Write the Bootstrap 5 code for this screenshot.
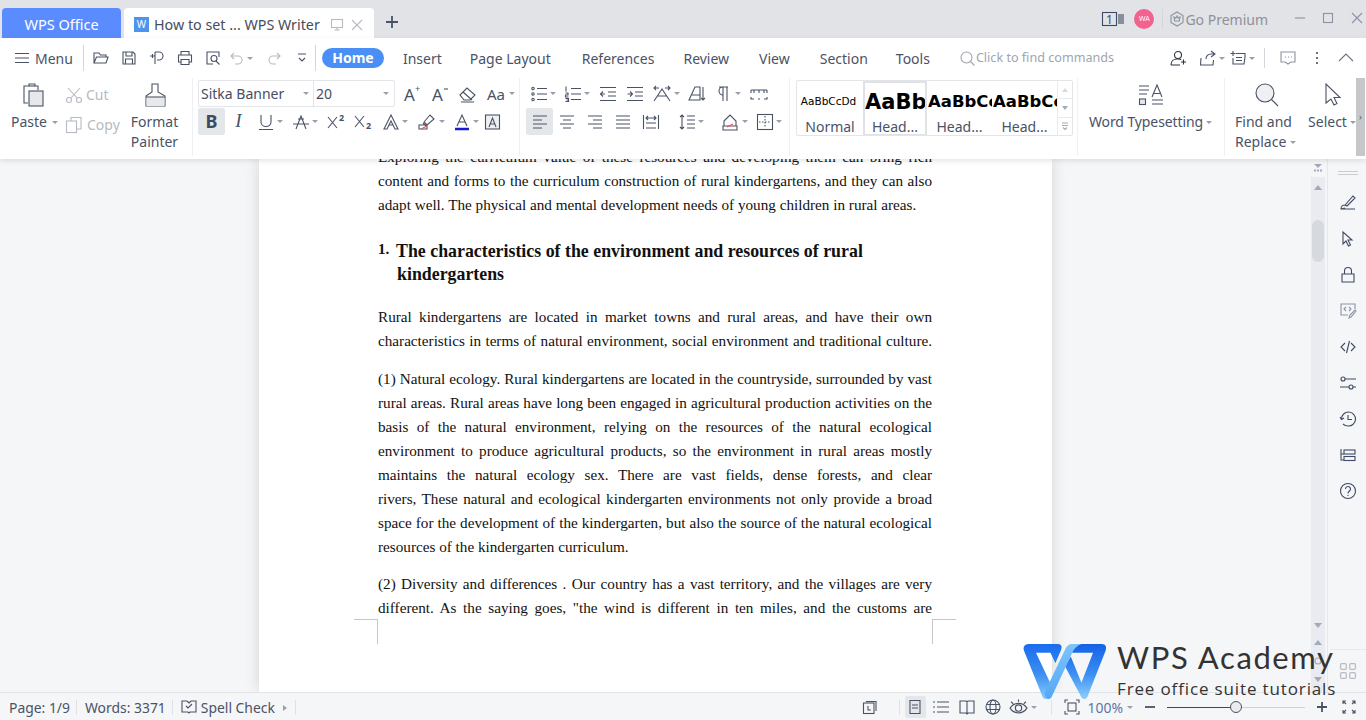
<!DOCTYPE html>
<html lang="en"><head><meta charset="utf-8"><title>WPS Writer</title>
<link href="https://cdn.jsdelivr.net/npm/bootstrap@5.3.0/dist/css/bootstrap.min.css" rel="stylesheet">
<style>
html,body{margin:0;height:720px;overflow:hidden}
body{font-family:"Noto Sans",sans-serif;font-size:14px;color:#4a5266;background:#f5f6f8}
svg{display:block;fill:none;stroke:currentColor;stroke-width:1.1;overflow:visible}
svg text{stroke:none;fill:currentColor;font-family:"Noto Sans",sans-serif}
.app{position:relative;width:1366px;height:720px;overflow:hidden}
.ttl{height:38px;background:#e1e3e7;padding:8px 0 0 2px}
.tb-wps{width:119px;height:30px;background:#5b8cff;color:#fff;border-radius:4px 4px 0 0;font-size:14.5px;padding-top:3px}
.tb-doc{width:250px;height:30px;margin-left:3px;background:#fff;border-radius:4px 4px 0 0;padding:3px 0 0 10px;color:#454d5f;font-size:14.3px}
.wlogo{width:15px;height:15px;background:#4c94ee;color:#fff;font-size:10px;line-height:15px;text-align:center;margin-right:5px}
.i10{width:14px;height:14px}.i12{width:12px;height:12px}.i16{width:16px;height:16px}.i18{width:18px;height:18px}.i20{width:20px;height:20px}.i24{width:24px;height:24px}.i26{width:26px;height:26px}
.plus{margin:8px 0 0 12px;color:#4a5266}
.ttl-r{margin-left:auto;margin-top:-8px;height:38px;color:#8c93a0}
.avat{width:20px;height:20px;border-radius:50%;background:#f2628f;color:#fff;font-size:7px;line-height:20px;text-align:center}
.vln{width:1px;background:#d4d6db}
.prem{font-size:14px;color:#8d919b}
.rib{height:121px;background:#fff;position:relative;z-index:2;box-shadow:0 2px 5px rgba(0,0,0,.1)}
.tabs{height:40px;padding-left:15px}
.pill{background:#4a8ff5;color:#fff;font-weight:700;border-radius:10px;width:62px;height:20px;line-height:20px;text-align:center;font-size:14px}
.tabtx{font-size:14px;color:#4a5266;white-space:nowrap}
.gry{color:#b6bac2}
.srch{color:#a0a5af;font-size:12.6px;white-space:nowrap}
.tools{height:81px}
.grp{height:78px;border-right:1px solid #eff0f2;flex:none}
.caret-d{width:0;height:0;border-left:3px solid transparent;border-right:3px solid transparent;border-top:3px solid #9a9fab;flex:none}
.lbl{font-size:14px;line-height:20px;white-space:nowrap}
.cel{height:27px;flex:none;gap:3px}
.on{background:#e4e7ea;border-radius:2px}
.fbox{width:197px;height:27px;border:1px solid #e3e5e9;border-radius:2px;flex:none}
.fsel{height:100%;padding:0 4px 0 2px;font-size:14px;color:#454d5f}
.fname{width:115px;border-right:1px solid #e3e5e9}
.sty{width:277px;height:56px;margin:2px 0 0 6px;border:1px solid #e3e5e9;border-radius:2px;flex:none}
.stc{flex:none;height:100%;overflow:hidden;font-family:"DejaVu Sans",sans-serif;color:#000;white-space:nowrap}
.stn{font-size:14px;color:#4a5266;font-family:"Noto Sans",sans-serif;line-height:15px;font-weight:400;flex:none}
.stsel{border:2px solid #e0e2e6;border-bottom-width:1px}
.smp{height:38px;line-height:41px;font-weight:700;overflow:hidden;width:100%;padding-left:1px;flex:none}
.stscr{width:15px;border-left:1px solid #e9ebee;margin-left:auto;flex:none;color:#a5aab4}
.stscr>div{flex:1;border-bottom:1px solid #e9ebee}
.stscr>div:last-child{border:0}
.rsb{width:9px;height:78px;background:#c6c7c9;color:#555;font-size:9px;flex:none}
.wk{height:533px}
.docar{width:1311px;flex:none;overflow:hidden}
.pg{width:793px;height:533px;background:#fff;box-shadow:0 0 14px rgba(0,0,0,.14);padding:0 120px 0 119px;font-family:"Liberation Serif",serif;color:#111;font-size:15.2px;overflow:hidden;flex:none}
.ln{line-height:24px;text-align:justify;text-align-last:justify;white-space:nowrap}
.fst{margin-top:-14px}
.lft{text-align-last:left}
.gp14{margin-top:14px}.gp13{margin-top:13px}
.hd{font-weight:700;font-size:17.85px;line-height:23px;margin-top:21px;color:#111;white-space:nowrap}
.hd2{padding-left:19px;margin-top:0;margin-bottom:19px}
.hnum{font-size:15px;display:inline-block;width:18px;vertical-align:3px}
.crp{margin:-1px -24px 0;height:25px}
.crp i{display:block;width:24px;height:25px;border-top:1px solid #c6c6c6}
.crp i:first-child{border-right:1px solid #c6c6c6}
.crp i:last-child{border-left:1px solid #c6c6c6}
.vcol{width:14px;flex:none;color:#a3a9b8}
.vtop{height:18px;padding-top:5px}
.vsb{background:#e9ebf0;flex:1}
.thm{width:12px;height:42px;background:#d6d9de;border-radius:6px;margin-top:30px}
.arr{width:0;height:0;border-left:4px solid transparent;border-right:4px solid transparent}
.au{border-bottom:5px solid #a3a9b8}.ad{border-top:5px solid #a3a9b8}
.sdp{width:39px;margin-left:2px;padding-left:2px;border-left:1px solid #e6e7ea;color:#3f4a63;flex:none}
.sdi{height:36px}
.dbl{width:20px;height:4px;border-top:1px solid #c9ccd3;border-bottom:1px solid #c9ccd3;margin:12px 0 10px}
.st{height:29px;border-top:1px solid #e3e4e8;background:#f5f6f8;padding-left:9px;font-size:13.9px;color:#4a5266}
.st>span{position:relative;top:1px}
.sp{width:1px;height:15px;background:#dfe1e5;flex:none}
.crr{width:0;height:0;border-top:3px solid transparent;border-bottom:3px solid transparent;border-left:4px solid #9a9fab}
.sld{width:138px;height:1px;background:#cfd2d8;position:relative;flex:none}
.sldf{height:1px;width:69px;background:#3d4a63}
.knb{position:absolute;left:63px;top:-6px;width:12px;height:12px;border-radius:50%;background:#e9ebee;border:1px solid #4a5266}
.wm{position:absolute;left:1023px;top:643px;z-index:5;pointer-events:none}
.wm1{font-family:Lato,sans-serif;font-weight:400;font-size:31px;line-height:32px;letter-spacing:1.6px;color:#333;white-space:nowrap;position:absolute;left:94px;top:-2px}
.wm2{font-family:"Open Sans",sans-serif;font-size:17px;line-height:20px;letter-spacing:.86px;color:#333;white-space:nowrap;position:absolute;left:94px;top:36px}
.w20{width:20px}.w27{width:27px}.w28{width:28px}.w34{width:34px}.w36{width:36px}
.ml8{margin-left:8px}.ml7{margin-left:7px}
</style></head><body>
<div class="app">

<!-- title bar -->
<div class="ttl d-flex">
 <div class="tb-wps d-flex align-items-center justify-content-center">WPS Office</div>
 <div class="tb-doc d-flex align-items-center">
  <div class="wlogo">W</div><span>How to set ... WPS Writer</span>
  <svg class="i12 gry" style="margin-left:11px" viewBox="0 0 12 12"><rect x=".5" y=".5" width="11" height="8"/><path d="M6 8.5V11M3.5 11h5"/></svg>
  <svg class="i12 gry ms-2" viewBox="0 0 12 12"><path d="M1 1l10 10M11 1L1 11"/></svg>
 </div>
 <svg class="i12 plus" viewBox="0 0 12 12"><path stroke-width="1.8" d="M6 0v12M0 6h12"/></svg>
 <div class="ttl-r d-flex align-items-center">
  <svg viewBox="0 0 22 14" style="width:22px;height:14px;color:#3f4a63"><rect x=".5" y=".5" width="14" height="13"/><text x="4" y="12" font-size="12" fill="#3f4a63">1</text><path d="M17 2v10M19 2v10M21 2v10"/></svg>
  <div class="avat" style="margin-left:10px">WA</div>
  <div class="vln" style="height:20px;margin-left:8px"></div>
  <svg class="i16" style="margin-left:6px" viewBox="0 0 16 16"><path d="M8 1l6 3.5v7L8 15l-6-3.5v-7zM5 6l1.8 1.3L8 5l1.2 2.3L11 6l-.7 4H5.700z"/></svg>
  <span class="prem">Go Premium</span>
  <svg class="i12" style="margin-left:26px" viewBox="0 0 12 12"><path d="M1 5h10"/></svg>
  <svg class="i12" style="margin-left:16px" viewBox="0 0 12 12"><rect x="1.500" y=".5" width="9" height="9"/></svg>
  <svg class="i12" style="margin-left:17px;margin-right:3px" viewBox="0 0 12 12"><path d="M1 0l10 10M11 0L1 10"/></svg>
 </div>
</div>

<div class="rib">
 <!-- tabs -->
 <div class="tabs d-flex align-items-center">
  <svg class="i16" style="width:14px" viewBox="0 0 14 12"><path d="M0 1.500h14M0 6h14M0 10.500h14"/></svg>
  <span class="tabtx" style="margin-left:6px">Menu</span>
  <div class="vln" style="height:26px;margin-left:10px"></div>
  <svg class="i16" style="margin-left:9px" viewBox="0 0 16 16"><path d="M1 13V3h5l1.500 2H13v2M1 13l2.500-6H15l-2 6z"/></svg>
  <svg class="i16" style="margin-left:12px" viewBox="0 0 16 16"><path d="M2 2h10l2 2v10H2zM5 2v4h6V2M4.500 14V9h7v5"/></svg>
  <svg class="i16" style="margin-left:12px" viewBox="0 0 16 16"><path d="M6 2h4a3 3 0 010 8H8M6 2v12M1 6h5M3.500 4v4"/></svg>
  <svg class="i16" style="margin-left:12px" viewBox="0 0 16 16"><path d="M4 5V1.500h8V5M4 12H1.500V5h13v7H12M4 9.500h8v5H4z"/></svg>
  <svg class="i16" style="margin-left:12px" viewBox="0 0 16 16"><path d="M14 7V2H2v12h6"/><circle cx="9" cy="8.500" r="3"/><path d="M11 11l3.500 3.500"/></svg>
  <svg class="i12 gry" style="margin-left:9px;width:14px" viewBox="0 0 14 12"><path d="M4 1L1 4l3 3M1 4h7a4 4 0 010 8H5"/></svg>
  <div class="caret-d" style="margin-left:3px"></div>
  <svg class="i12 gry" style="margin-left:14px;width:14px" viewBox="0 0 14 12"><path d="M10 1l3 3-3 3M13 4H6a4 4 0 000 8h3"/></svg>
  <svg class="i10" style="margin-left:16px;width:10px;height:10px" viewBox="0 0 10 10"><path d="M1 1h8M2 5l3 3 3-3"/></svg>
  <div class="vln" style="height:26px;margin-left:8px"></div>
  <div class="pill" style="margin-left:6px">Home</div>
  <span class="tabtx" style="margin-left:19px">Insert</span>
  <span class="tabtx" style="margin-left:28px">Page Layout</span>
  <span class="tabtx" style="margin-left:31px">References</span>
  <span class="tabtx" style="margin-left:29px">Review</span>
  <span class="tabtx" style="margin-left:30px">View</span>
  <span class="tabtx" style="margin-left:30px">Section</span>
  <span class="tabtx" style="margin-left:28px">Tools</span>
  <svg class="i16" style="margin-left:30px;color:#a0a5af;width:15px;height:15px" viewBox="0 0 15 15"><circle cx="6.500" cy="6.500" r="5.500"/><path d="M10.500 10.500l4 4"/></svg>
  <span class="srch" style="margin-left:1px">Click to find commands</span>
  <svg class="i16" style="margin-left:56px;color:#2c3344" viewBox="0 0 16 16"><circle cx="8" cy="5" r="3.500"/><path d="M1 15c0-4 3-6 6-6h2c1 0 2 .5 2 1M1 15h9M11 12h5M13.500 9.500v5"/></svg>
  <svg class="i16" style="margin-left:14px" viewBox="0 0 16 16"><path d="M11 1l4 3-4 3M15 4h-4c-3 0-5 2-5 5M1 8l-.5 7H13l.5-5"/></svg>
  <div class="caret-d" style="margin-left:3px"></div>
  <svg class="i16" style="margin-left:5px" viewBox="0 0 16 16"><path d="M3 1v5M.5 3.500h5M6 3.500h9V7l-1 7H3V8M6 7.500h6M6 10.500h6"/></svg>
  <div class="caret-d" style="margin-left:3px"></div>
  <div class="vln" style="height:20px;margin-left:9px"></div>
  <svg class="i16" style="margin-left:15px;color:#8c93a0" viewBox="0 0 16 16"><path d="M1 2h14v10h-4l-3 2-3-2H1z"/><path stroke-width="1.500" d="M5 7h.7M8 7h.7M11 7h.7"/></svg>
  <svg class="i16" style="margin-left:13px;color:#6b7280" viewBox="0 0 16 16"><path stroke-width="2" d="M8 2v2M8 7v2M8 12v2"/></svg>
  <svg class="i16" style="margin-left:13px;color:#6b7280" viewBox="0 0 16 16"><path d="M1 11l7-7 7 7"/></svg>
 </div>

 <!-- ribbon tools -->
 <div class="tools d-flex">
  <!-- clipboard -->
  <div class="grp d-flex" style="width:193px;padding-left:5px">
   <div class="d-flex flex-column align-items-center" style="width:56px;padding-top:5px">
    <svg class="i24" viewBox="0 0 24 24"><path d="M17 7V3h-3V1H8v2H3v17h4"/><path d="M8 3h6"/><rect x="8" y="8" width="14" height="15" fill="#e6e8ec"/></svg>
    <div class="lbl d-flex align-items-center" style="gap:5px;margin:5px 0 0 3px">Paste<span class="caret-d"></span></div>
   </div>
   <div class="d-flex flex-column gry" style="width:66px;padding:8px 0 0 5px">
    <div class="d-flex align-items-center" style="gap:4px;height:18px">
     <svg class="i16" viewBox="0 0 16 16"><circle cx="3" cy="13" r="2.500"/><circle cx="13" cy="13" r="2.500"/><path d="M5 11L14 1M11 11L2 1"/></svg><span class="lbl">Cut</span></div>
    <div class="d-flex align-items-center" style="gap:5px;height:18px;margin-top:12px">
     <svg class="i16" viewBox="0 0 16 16"><path d="M5 4V.5h10V12h-4"/><rect x=".5" y="4" width="10" height="11.500"/></svg><span class="lbl">Copy</span></div>
   </div>
   <div class="d-flex flex-column align-items-center" style="width:49px;margin-left:3px;padding-top:5px">
    <svg class="i24" viewBox="0 0 24 24"><path d="M9 1h6v8l7 4v10H3V13l6-4z"/><path d="M3.500 14.500h18V23h-18z" fill="#e6e8ec" stroke="none"/><path d="M3 14h19"/></svg>
    <div class="lbl" style="margin-top:5px">Format</div><div class="lbl">Painter</div>
   </div>
  </div>
  <!-- font -->
  <div class="grp" style="width:327px;padding:2px 0 0 5px">
   <div class="d-flex">
    <div class="fbox d-flex align-items-center">
     <div class="fsel fname d-flex align-items-center justify-content-between">Sitka Banner<span class="caret-d"></span></div>
     <div class="fsel flex-grow-1 d-flex align-items-center justify-content-between">20<span class="caret-d" style="margin-right:1px"></span></div>
    </div>
    <div class="cel w28 ms-1 d-flex align-items-center justify-content-center"><svg class="i18" viewBox="0 0 18 18"><text x="0" y="16" font-size="17">A</text><text x="11" y="7" font-size="9">+</text></svg></div>
    <div class="cel w28 d-flex align-items-center justify-content-center"><svg class="i18" viewBox="0 0 18 18"><text x="0" y="16" font-size="17">A</text><path d="M12 4h4"/></svg></div>
    <div class="cel w28 d-flex align-items-center justify-content-center"><svg class="i18" viewBox="0 0 18 18"><path d="M0 10l7-7 8 7-5 5H4zM3 7l9 8M1 17h13"/></svg></div>
    <div class="cel w36 d-flex align-items-center justify-content-center"><svg class="i18" viewBox="0 0 18 18"><text x="-1" y="15" font-size="15">Aa</text></svg><span class="caret-d"></span></div>
   </div>
   <div class="d-flex" style="margin-top:1px">
    <div class="cel w27 on d-flex align-items-center justify-content-center"><span style="font-weight:700;font-size:18px;color:#3d4a63">B</span></div>
    <div class="cel w27 d-flex align-items-center justify-content-center"><span style="font-style:italic;font-family:'Liberation Serif';font-size:19px">I</span></div>
    <div class="cel w36 d-flex align-items-center justify-content-center"><svg class="i16" viewBox="0 0 16 16"><path d="M3 1v7c0 6 10 6 10 0V1M1 15.500h14"/></svg><span class="caret-d"></span></div>
    <div class="cel w34 d-flex align-items-center justify-content-center"><svg class="i16" viewBox="0 0 16 16"><path d="M3 15L8 2l5 13M0 10h16M5 5h6"/></svg><span class="caret-d"></span></div>
    <div class="cel w27 d-flex align-items-center justify-content-center"><svg class="i18" viewBox="0 0 18 18"><path d="M1 4l9 11M10 4l-9 11"/><text x="12" y="8" font-size="9" font-weight="700">2</text></svg></div>
    <div class="cel w28 d-flex align-items-center justify-content-center"><svg class="i18" viewBox="0 0 18 18"><path d="M1 3l9 11M10 3L1 14"/><text x="12" y="16" font-size="9" font-weight="700">2</text></svg></div>
    <div class="cel w36 d-flex align-items-center justify-content-center"><svg class="i16" viewBox="0 0 16 16"><path d="M1 15L8 1l7 14h-3L8 7l-4 8zM6 11h4"/></svg><span class="caret-d"></span></div>
    <div class="cel w36 d-flex align-items-center justify-content-center"><svg class="i18" viewBox="0 0 18 18"><path d="M6 9l6-7 4 4-7 6zM5 10l3 3M1 12h8v4H1z"/><path d="M3 16l6-3" stroke="#e05a5a"/></svg><span class="caret-d"></span></div>
    <div class="cel w34 d-flex align-items-center justify-content-center"><svg class="i16" viewBox="0 0 16 16"><path d="M3 12L8 1l5 11M5 8h6"/><path d="M1 15h14" stroke="#1a1ad6" stroke-width="2.500"/></svg><span class="caret-d"></span></div>
    <div class="cel w20 d-flex align-items-center justify-content-center"><svg class="i16" viewBox="0 0 16 16"><rect x=".5" y="1" width="14" height="14" fill="#eef0f2"/><path d="M4 13l3.500-9 3.500 9M5 10h5"/></svg></div>
   </div>
  </div>
  <!-- paragraph -->
  <div class="grp" style="width:270px;padding:2px 0 0 6px">
   <div class="d-flex">
    <div class="cel w34 d-flex align-items-center justify-content-center"><svg class="i16" viewBox="0 0 16 16"><circle cx="2" cy="2.500" r="1.200"/><circle cx="2" cy="8" r="1.200"/><circle cx="2" cy="13.500" r="1.200"/><path d="M6 2.500h10M6 8h10M6 13.500h10"/></svg><span class="caret-d"></span></div>
    <div class="cel w34 d-flex align-items-center justify-content-center"><svg class="i16" viewBox="0 0 16 16"><path d="M6 2.500h10M6 8h10M6 13.500h10M1 .5v5M.5 7h2.500v2H.5v2h3M.5 12.500h3v3h-3M1.500 14h2"/></svg><span class="caret-d"></span></div>
    <div class="cel w27 d-flex align-items-center justify-content-center"><svg class="i16" viewBox="0 0 16 16"><path d="M0 1.500h16M8 6h8M8 10h8M0 14.500h16M5 8H.5M3 5.500L.5 8 3 10.500"/></svg></div>
    <div class="cel w28 d-flex align-items-center justify-content-center"><svg class="i16" viewBox="0 0 16 16"><path d="M0 1.500h16M8 6h8M8 10h8M0 14.500h16M.5 8H5M3 5.500L5.500 8 3 10.500"/></svg></div>
    <div class="cel w34 d-flex align-items-center justify-content-center"><svg class="i18" viewBox="0 0 18 18"><path d="M1 3h5M3 1L1 3l2 2M12 3h5M15 1l2 2-2 2M1 16L9 4l8 12M4 11h10"/></svg><span class="caret-d"></span></div>
    <div class="cel w28 d-flex align-items-center justify-content-center"><svg class="i18" viewBox="0 0 18 18"><path d="M1 15L7 2h5v13H1zM4 10h8"/><path d="M15 2v13M13 13l2 2 2-2"/></svg></div>
    <div class="cel w34 d-flex align-items-center justify-content-center"><svg class="i16" viewBox="0 0 16 16"><path d="M7 1v14M11 1v14M3 1h9M7 1a4 4 0 000 8"/></svg><span class="caret-d"></span></div>
    <div class="cel w28 d-flex align-items-center justify-content-center"><svg class="i18" viewBox="0 0 18 14"><path d="M1 3h16M1 3v3M17 3v3M4 3v3M9 3v3M14 3v3M1 10v2h3M14 12h3v-2M8 12h2"/></svg></div>
   </div>
   <div class="d-flex" style="margin-top:1px">
    <div class="cel w27 on d-flex align-items-center justify-content-center"><svg class="i16" viewBox="0 0 16 16"><path d="M1 2h14M1 6h9M1 10h14M1 14h9"/></svg></div>
    <div class="cel w28 d-flex align-items-center justify-content-center"><svg class="i16" viewBox="0 0 16 16"><path d="M1 2h14M4 6h8M1 10h14M4 14h8"/></svg></div>
    <div class="cel w28 d-flex align-items-center justify-content-center"><svg class="i16" viewBox="0 0 16 16"><path d="M1 2h14M6 6h9M1 10h14M6 14h9"/></svg></div>
    <div class="cel w28 d-flex align-items-center justify-content-center"><svg class="i16" viewBox="0 0 16 16"><path d="M1 2h14M1 6h14M1 10h14M1 14h14"/></svg></div>
    <div class="cel w28 d-flex align-items-center justify-content-center"><svg class="i16" viewBox="0 0 16 16"><path d="M.5 1v14M15.500 1v14M3 9h10M3 14h10M3 4h10M5 2L3 4l2 2M11 2l2 2-2 2"/></svg></div>
    <div class="cel w36 ml8 d-flex align-items-center justify-content-center"><svg class="i16" viewBox="0 0 16 16"><path d="M3 1v14M1 3l2-2 2 2M1 13l2 2 2-2M8 2h8M8 6h8M8 10h8M8 14h8"/></svg><span class="caret-d"></span></div>
    <div class="cel w36 ml7 d-flex align-items-center justify-content-center"><svg class="i18" viewBox="0 0 18 18"><path d="M3 8l6-6 6 6v5H3zM2 13h14v4H2z"/><path d="M6 14l6-3" stroke="#e05a5a"/></svg><span class="caret-d"></span></div>
    <div class="cel w34 d-flex align-items-center justify-content-center"><svg class="i16" viewBox="0 0 16 16"><rect x=".5" y=".5" width="15" height="15"/><path stroke-dasharray="1.500 1.500" d="M8 2v12M2 8h12"/></svg><span class="caret-d"></span></div>
   </div>
  </div>
  <!-- styles -->
  <div class="grp d-flex" style="width:288px">
   <div class="sty d-flex">
    <div class="stc d-flex flex-column align-items-center" style="width:66px"><div class="smp" style="font-weight:400;font-size:10.500px;text-align:center;padding:0 3px 0 0">AaBbCcDd</div><div class="stn">Normal</div></div>
    <div class="stc stsel d-flex flex-column align-items-center" style="width:64px"><div class="smp" style="font-size:21px;height:36px;line-height:38px;padding-left:0">AaBb</div><div class="stn">Head...</div></div>
    <div class="stc d-flex flex-column align-items-center" style="width:65px"><div class="smp" style="font-size:16.500px">AaBbCc</div><div class="stn">Head...</div></div>
    <div class="stc d-flex flex-column align-items-center" style="width:65px"><div class="smp" style="font-size:16.500px">AaBbCc</div><div class="stn">Head...</div></div>
    <div class="stscr d-flex flex-column">
     <div class="d-flex align-items-center justify-content-center"><span class="arr" style="border-bottom:4px solid #d5d8dd;border-left-width:3px;border-right-width:3px"></span></div>
     <div class="d-flex align-items-center justify-content-center"><span class="arr" style="border-top:4px solid #a5aab4;border-left-width:3px;border-right-width:3px"></span></div>
     <div class="d-flex align-items-center justify-content-center"><svg style="width:8px;height:8px" viewBox="0 0 8 8"><path d="M1 1h6M1 3.500h6M2 5.500l2 2 2-2"/></svg></div>
    </div>
   </div>
  </div>
  <!-- typesetting -->
  <div class="grp d-flex flex-column align-items-center" style="width:147px;padding:5px 1px 0 0">
   <svg class="i24" viewBox="0 0 24 22"><path d="M0 2h10M0 6h10M0 10h8M13 13l5-12 5 12M14.500 9.500h7M13 16h11M13 20h11"/><rect x=".5" y="15" width="6" height="5.500" fill="#e6e8ec"/></svg>
   <div class="lbl d-flex align-items-center" style="gap:3px;margin-top:5px;letter-spacing:-.1px">Word Typesetting<span class="caret-d"></span></div>
  </div>
  <!-- find/select -->
  <div class="d-flex flex-none" style="width:131px">
   <div class="d-flex flex-column" style="width:83px;padding:5px 0 0 10px">
    <svg class="i24" style="margin-left:20px" viewBox="0 0 24 24"><circle cx="10" cy="10" r="9" fill="#eef0f3"/><path d="M16.500 16.500L23 23"/></svg>
    <div class="lbl" style="margin-top:5px">Find and</div>
    <div class="lbl d-flex align-items-center" style="gap:4px">Replace<span class="caret-d"></span></div>
   </div>
   <div class="d-flex flex-column align-items-center" style="width:48px;padding-top:5px">
    <svg class="i24" viewBox="0 0 24 24"><path d="M6 1v19l5-4 3 6 3-1.500-3-6h6z"/></svg>
    <div class="lbl d-flex align-items-center" style="gap:3px;margin-top:5px">Select<span class="caret-d"></span></div>
   </div>
  </div>
  <div class="rsb d-flex align-items-center justify-content-center">›</div>
 </div>
</div>

<!-- workspace -->
<div class="wk d-flex">
 <div class="docar d-flex justify-content-center">
  <div class="pg">
   <div class="ln fst">Exploring the curriculum value of these resources and developing them can bring rich</div>
   <div class="ln">content and forms to the curriculum construction of rural kindergartens, and they can also</div>
   <div class="ln lft">adapt well. The physical and mental development needs of young children in rural areas.</div>
   <div class="hd"><span class="hnum">1.</span>The characteristics of the environment and resources of rural</div>
   <div class="hd hd2">kindergartens</div>
   <div class="ln">Rural kindergartens are located in market towns and rural areas, and have their own</div>
   <div class="ln">characteristics in terms of natural environment, social environment and traditional culture.</div>
   <div class="ln gp14">(1) Natural ecology. Rural kindergartens are located in the countryside, surrounded by vast</div>
   <div class="ln">rural areas. Rural areas have long been engaged in agricultural production activities on the</div>
   <div class="ln">basis of the natural environment, relying on the resources of the natural ecological</div>
   <div class="ln">environment to produce agricultural products, so the environment in rural areas mostly</div>
   <div class="ln">maintains the natural ecology sex. There are vast fields, dense forests, and clear</div>
   <div class="ln">rivers, These natural and ecological kindergarten environments not only provide a broad</div>
   <div class="ln">space for the development of the kindergarten, but also the source of the natural ecological</div>
   <div class="ln lft">resources of the kindergarten curriculum.</div>
   <div class="ln gp13">(2) Diversity and differences . Our country has a vast territory, and the villages are very</div>
   <div class="ln">different. As the saying goes, "the wind is different in ten miles, and the customs are</div>
   <div class="crp d-flex justify-content-between"><i></i><i></i></div>
  </div>
 </div>
 <div class="vcol d-flex flex-column">
  <div class="vtop d-flex flex-column align-items-center">
   <span class="arr ad" style="border-top-width:4px"></span>
   <svg style="width:8px;height:3px;margin-top:1px" viewBox="0 0 8 3"><path stroke-width="2" stroke-dasharray="2 1" d="M0 1.500h8"/></svg>
  </div>
  <div class="vsb d-flex flex-column align-items-center">
   <span class="arr au" style="margin-top:8px"></span>
   <div class="thm"></div>
   <div class="d-flex flex-column align-items-center mt-auto" style="gap:12px;padding-bottom:10px">
    <span class="arr ad"></span><span class="arr au"></span>
    <svg style="width:8px;height:8px" viewBox="0 0 8 8"><circle cx="4" cy="4" r="3"/></svg>
    <span class="arr ad"></span>
   </div>
  </div>
 </div>
 <div class="sdp d-flex flex-column align-items-center">
  <div class="dbl"></div>
  <div class="sdi d-flex align-items-center"><svg class="i16" viewBox="0 0 16 16"><path d="M5 10l8-9 2 2-8 8zM5 10c-3 0-4 2-4 4h14M1 14l4-1"/></svg></div>
  <div class="sdi d-flex align-items-center"><svg class="i16" viewBox="0 0 16 16"><path d="M3 1v12l3-3 2.500 5 2-1-2.500-5h4z"/></svg></div>
  <div class="sdi d-flex align-items-center"><svg class="i16" viewBox="0 0 16 16"><path d="M2 7h12v8H2zM4.500 7V4a3.500 3.500 0 017 0v3"/></svg></div>
  <div class="sdi d-flex align-items-center"><svg class="i16" style="color:#8c93a5" viewBox="0 0 16 16"><path d="M8 12H1V1h14v5M6 4L4 6l2 2M9 4l2 2-2 2M9 15l1-3 5-5 1 1-5 6z"/></svg></div>
  <div class="sdi d-flex align-items-center"><svg class="i16" viewBox="0 0 16 16"><path d="M5 4L1 8l4 4M11 4l4 4-4 4M9.500 2l-3 12"/></svg></div>
  <div class="sdi d-flex align-items-center"><svg class="i16" viewBox="0 0 16 16"><circle cx="3" cy="4" r="2"/><path d="M5 4h11M0 12h9M13 12h3"/><circle cx="11" cy="12" r="2"/></svg></div>
  <div class="sdi d-flex align-items-center"><svg class="i16" viewBox="0 0 16 16"><path d="M1.500 8A7 7 0 118 15a7 7 0 01-5-2M0 6l1.500 2.500L4 7M8 4v4.500h4"/></svg></div>
  <div class="sdi d-flex align-items-center"><svg class="i16" viewBox="0 0 16 16"><path d="M1 2v11h3M1 7h3"/><rect x="4" y="3" width="11" height="4"/><rect x="4" y="9.500" width="11" height="4"/></svg></div>
  <div class="sdi d-flex align-items-center"><svg class="i16" viewBox="0 0 16 16"><circle cx="8" cy="8" r="7.500"/><path d="M5.500 6a2.500 2.500 0 114 2c-1 .7-1.500 1.200-1.500 2.500M8 12v1"/></svg></div>
  <div class="w-100 mt-auto d-flex justify-content-center align-items-center" style="border-top:1px solid #e6e7ea;height:43px;color:#b8bbc3">
   <svg class="i16" viewBox="0 0 14 14"><rect x=".5" y=".5" width="5" height="5" rx="1"/><rect x="8.500" y=".5" width="5" height="5" rx="1"/><rect x=".5" y="8.500" width="5" height="5" rx="1"/><rect x="8.500" y="8.500" width="5" height="5" rx="1"/></svg>
  </div>
 </div>
</div>

<!-- status bar -->
<div class="st d-flex align-items-center">
 <span>Page: 1/9</span><div class="sp" style="margin-left:6px"></div>
 <span style="margin-left:8px">Words: 3371</span><div class="sp" style="margin-left:6px"></div>
 <svg class="i16" style="margin-left:8px" viewBox="0 0 16 16"><path d="M1 2h5l2 2 2-2h5v11H9l-1 1-1-1H1zM5 7l2 2 4-4"/></svg>
 <span style="margin-left:4px">Spell Check</span>
 <span class="crr" style="margin-left:8px"></span><div class="sp" style="margin-left:8px"></div>
 <svg class="ms-auto" style="margin-right:22px;width:14px;height:14px" viewBox="0 0 14 14"><path d="M3 1.500h10V11"/><rect x=".5" y="3" width="10.500" height="10.500"/><path d="M5 6v4h3"/></svg>
 <div class="sp" style="margin-right:5px"></div>
 <div class="on d-flex align-items-center justify-content-center" style="width:21px;height:22px"><svg viewBox="0 0 12 14" style="width:12px;height:14px"><path d="M1 .5h10v13H1zM3 5h6M3 8h6"/></svg></div>
 <svg class="i16" style="margin-left:7px" viewBox="0 0 16 16"><path d="M0 3h2M4 3h12M0 8h2M4 8h12M0 13h2M4 13h12"/></svg>
 <svg class="i16" style="margin-left:10px" viewBox="0 0 16 16"><path d="M1 2h6l1 1 1-1h6v12H9l-1 1-1-1H1zM8 3v11"/></svg>
 <svg class="i16" style="margin-left:10px" viewBox="0 0 16 16"><circle cx="8" cy="8" r="7"/><ellipse cx="8" cy="8" rx="3" ry="7"/><path d="M1 5.500h14M1 10.500h14"/></svg>
 <svg class="i18" style="margin-left:8px;width:19px" viewBox="0 0 18 14"><path d="M1 8c4-6 12-6 16 0-4 6-12 6-16 0zM2 2l2 2M9 0v2M16 2l-2 2"/><circle cx="9" cy="8" r="3"/></svg>
 <span class="caret-d" style="margin-left:3px;top:0"></span>
 <div class="sp" style="margin-left:14px"></div>
 <svg class="i16" style="margin-left:12px" viewBox="0 0 16 16"><path d="M1 4V1h3M12 1h3v3M15 12v3h-3M4 15H1v-3"/><rect x="4" y="4" width="8" height="8"/></svg>
 <span style="margin-left:8px;color:#5d76a8">100%</span>
 <span class="caret-d" style="margin-left:4px;top:0"></span>
 <svg class="i12" style="margin-left:11px" viewBox="0 0 12 12"><path stroke-width="1.800" d="M1 6h10"/></svg>
 <div class="sld" style="margin-left:11px"><div class="sldf"></div><div class="knb"></div></div>
 <svg class="i12" style="margin-left:11px" viewBox="0 0 12 12"><path stroke-width="1.800" d="M1 6h10M6 1v10"/></svg>
 <svg style="margin-left:14px;margin-right:10px;width:14px;height:14px" viewBox="0 0 14 14"><path d="M1 4V1h3M10 1h3v3M13 10v3h-3M4 13H1v-3M1 1l3 3M13 1l-3 3M13 13l-3-3M1 13l3-3"/></svg>
</div>

<!-- watermark overlay -->
<div class="wm">
 <svg width="84" height="58" viewBox="0 0 86 60" style="stroke:none">
  <defs>
   <linearGradient id="g1" x1="0" y1="0" x2="0" y2="1"><stop offset="0" stop-color="#1a6cee"/><stop offset=".55" stop-color="#3d8ff2"/><stop offset="1" stop-color="#86cbfb"/></linearGradient>
   <linearGradient id="g2" x1="0" y1="0" x2="0" y2="1"><stop offset="0" stop-color="#1561e6"/><stop offset=".55" stop-color="#3b8ff2"/><stop offset="1" stop-color="#8dcffb"/></linearGradient>
   <linearGradient id="g3" x1="0" y1="0" x2="0" y2="1"><stop offset="0" stop-color="#7cc4fb"/><stop offset="1" stop-color="#55a8f6"/></linearGradient>
  </defs>
  <path fill="url(#g1)" d="M5 1H35Q41 1 39 7L33 21 28 10H13L29 44 26 56Q23 60 20 56L1 9Q-2 2 5 1Z"/>
  <path fill="url(#g2)" d="M54 1H81Q87 1 85 8L66 56Q63 60 60 56L43 24 49 14 60 41 72 10H48Z"/>
  <path fill="url(#g3)" d="M49 1H60Q54 3 51 9L29 56Q26 60 23 56 21 53 23 49L43 7Q45 2 49 1Z"/>
 </svg>
 <div class="wm1">WPS Academy</div>
 <div class="wm2">Free office suite tutorials</div>
</div>
</div>
</body></html>
